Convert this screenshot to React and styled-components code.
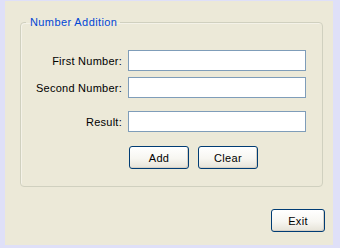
import React from "react";
import styled, { createGlobalStyle } from "styled-components";

const GlobalStyle = createGlobalStyle`
  html, body {
    margin: 0;
    padding: 0;
    background: #dfe0f8;
    font-family: "Liberation Sans", Arial, sans-serif;
  }
`;

const Frame = styled.div`
  width: 340px;
  height: 248px;
  box-sizing: border-box;
  padding: 1px 7px 3px 5px;
  background: #dfe0f8;
`;

const Panel = styled.div`
  height: 100%;
  box-sizing: border-box;
  background: #ece9d8;
  display: flex;
  flex-direction: column;
  padding: 14px 8px 0 15px;
`;

const Group = styled.fieldset`
  margin: 0 2px 0 0;
  padding: 21px 0 17px 0;
  border: 1px solid #d0d0bf;
  border-radius: 4px;
  min-width: 0;
  box-shadow: inset 1px 1px 0 #f4f2e8;
`;

const Legend = styled.legend`
  margin-left: 5px;
  padding: 0 3px 0 4px;
  color: #0046d5;
  font-size: 11px;
  letter-spacing: 0.4px;
  line-height: 14px;
`;

const Form = styled.div`
  display: grid;
  grid-template-columns: 101px 178px;
  column-gap: 6px;
  row-gap: 6px;
  align-items: center;
`;

const Label = styled.label`
  text-align: right;
  font-size: 11px;
  letter-spacing: 0.25px;
  color: #000;
  margin-top: ${(p) => p.$gap || 0}px;
`;

const Field = styled.input`
  width: 178px;
  height: 21px;
  box-sizing: border-box;
  border: 1px solid #7f9db9;
  background: #fff;
  margin: ${(p) => p.$gap || 0}px 0 0 0;
  padding: 0 3px;
  font: 11px "Liberation Sans", Arial, sans-serif;
  outline: none;
`;

const Buttons = styled.div`
  grid-column: 2;
  display: flex;
  gap: 9px;
  margin: 8px 0 0 1px;
`;

const Button = styled.button`
  width: ${(p) => p.$w || 60}px;
  height: 23px;
  box-sizing: border-box;
  border: 1px solid #003c74;
  border-radius: 3px;
  background: linear-gradient(180deg, #ffffff 0%, #f7f6f1 55%, #e6e3d8 100%);
  box-shadow: inset -1px -1px 0 #d6d0c5;
  font: 11px "Liberation Sans", Arial, sans-serif;
  letter-spacing: 0.3px;
  color: #000;
  padding: 0;
  cursor: pointer;
`;

const Footer = styled.div`
  display: flex;
  justify-content: flex-end;
  margin-top: 22px;
`;

export default function App() {
  return (
    <>
      <GlobalStyle />
      <Frame>
        <Panel>
          <Group>
            <Legend>Number Addition</Legend>
            <Form>
              <Label>First Number:</Label>
              <Field />
              <Label>Second Number:</Label>
              <Field />
              <Label $gap={7}>Result:</Label>
              <Field $gap={7} />
              <Buttons>
                <Button>Add</Button>
                <Button>Clear</Button>
              </Buttons>
            </Form>
          </Group>
          <Footer>
            <Button $w={54}>Exit</Button>
          </Footer>
        </Panel>
      </Frame>
    </>
  );
}
